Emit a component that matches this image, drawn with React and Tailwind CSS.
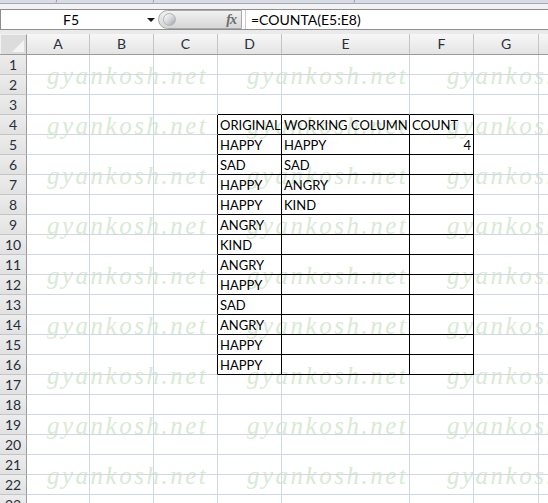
import React from "react";

const cols = [
  { k: "A", w: "w-[63px]" },
  { k: "B", w: "w-[64px]" },
  { k: "C", w: "w-[64px]" },
  { k: "D", w: "w-[64px]" },
  { k: "E", w: "w-[128px]" },
  { k: "F", w: "w-[64px]" },
  { k: "G", w: "w-[65px]" },
  { k: "H", w: "w-[10px]" },
];

const data = {
  4: ["ORIGINAL", "WORKING COLUMN", "COUNT"],
  5: ["HAPPY", "HAPPY", "4"],
  6: ["SAD", "SAD", ""],
  7: ["HAPPY", "ANGRY", ""],
  8: ["HAPPY", "KIND", ""],
  9: ["ANGRY", "", ""],
  10: ["KIND", "", ""],
  11: ["ANGRY", "", ""],
  12: ["HAPPY", "", ""],
  13: ["SAD", "", ""],
  14: ["ANGRY", "", ""],
  15: ["HAPPY", "", ""],
  16: ["HAPPY", "", ""],
};

const rows = Array.from({ length: 23 }, (_, i) => i + 1);
const wmRows = [77, 127, 177, 227, 277, 327, 377, 427, 477];
const wmCols = [47, 247, 447];

function Cell({ col, ci, r }) {
  const inTable = r >= 4 && r <= 16 && ci >= 3 && ci <= 5;
  const leftOfTable = r >= 4 && r <= 16 && ci === 2;
  const aboveTable = r === 3 && ci >= 3 && ci <= 5;
  const rightBorder = ci === 7 ? "" : inTable || leftOfTable ? "border-r border-r-black" : "border-r border-r-[#d0d7e5]";
  const bottomBorder = inTable || aboveTable ? "border-b border-b-black" : "border-b border-b-[#d0d7e5]";
  let text = "";
  let right = false;
  if (inTable && data[r]) {
    text = data[r][ci - 3];
    right = ci === 5 && r === 5;
  }
  return (
    <div
      className={`${col.w} h-[20px] shrink-0 ${rightBorder} ${bottomBorder} flex items-end ${right ? "justify-end pr-[2px]" : "pl-[2px]"} overflow-hidden whitespace-nowrap text-[13px] leading-[18px] text-black`}
    >
      {text}
    </div>
  );
}

export default function App() {
  return (
    <div className="w-[548px] h-[503px] overflow-hidden bg-white font-['Lato','Liberation_Sans',sans-serif] select-none">
      {/* tab strip */}
      <div className="h-[4px] bg-[#d9dce4] border-b border-b-[#a4a8b2] flex">
        <div className="w-[57px] border-r border-r-[#9ca0aa] rounded-br-[2px]" />
        <div className="w-[97px] border-r border-r-[#9ca0aa] rounded-br-[2px]" />
        <div className="w-[198px] border-r border-r-[#9ca0aa] rounded-br-[2px] ml-[3px]" />
        <div className="flex-1 ml-[4px]" />
      </div>
      <div className="h-[5px] bg-[#f2f2f2]" />
      {/* formula bar */}
      <div className="h-[21px] border-y border-y-[#8e8e8e] bg-white flex items-stretch">
        <div className="w-[158px] border-l border-l-[#8e8e8e] relative flex items-center">
          <div className="w-[140px] text-center text-[14px] leading-[19px] text-black">F5</div>
          <svg className="absolute left-[146px] top-[8px]" width="8" height="4" viewBox="0 0 8 4">
            <polygon points="0,0 8,0 4,4" fill="#1a1a1a" />
          </svg>
        </div>
        <div className="w-[84px] rounded-l-full rounded-r-[2px] border border-[#a9a9a9] bg-gradient-to-b from-[#f1f1f1] to-[#d6d6d6] flex items-center justify-between pl-[4px] pr-[5px]">
          <div className="w-[13px] h-[13px] rounded-full bg-gradient-to-br from-[#ffffff] via-[#d6d8dc] to-[#9ea3ab] border border-[#b4b4b4]" />
          <span className="font-['Liberation_Serif',serif] italic font-bold text-[14px] leading-[16px] text-[#6b6b6b] tracking-[-1px]">fx</span>
        </div>
        <div className="w-[1px] bg-[#c8c8c8] ml-[3px]" />
        <div className="flex-1 pl-[5px] flex items-center text-[14px] leading-[19px] text-black">=COUNTA(E5:E8)</div>
      </div>
      <div className="h-[4px] bg-[#eaeaea]" />
      {/* sheet */}
      <div className="relative">
        {/* watermark layer */}
        <div className="absolute inset-0 pointer-events-none overflow-hidden">
          {wmRows.map((y) =>
            wmCols.map((x) => (
              <span
                key={`${x}-${y}`}
                className="absolute font-['Liberation_Serif',serif] italic text-[25px] leading-[24px] tracking-[2.5px] text-[#d9ead4] whitespace-nowrap"
                style={{ left: x, top: y - 34 - 13 }}
              >
                gyankosh.net
              </span>
            ))
          )}
        </div>
        <div className="relative">
          {/* header row */}
          <div className="flex h-[21px] border-b border-b-[#9b9b9b] bg-gradient-to-b from-[#f7f7f7] to-[#e4e4e4]">
            <div className="w-[27px] shrink-0 border-r border-r-[#9b9b9b] bg-[#dcdcdc] relative border-t border-t-[#f2f2f2] border-l border-l-[#f2f2f2]">
              <svg className="absolute right-[2px] bottom-[2px]" width="12" height="12" viewBox="0 0 12 12">
                <polygon points="12,0 12,12 0,12" fill="#f4f4f4" />
              </svg>
            </div>
            {cols.map((c, i) => (
              <div
                key={c.k}
                className={`${c.w} shrink-0 ${i === 7 ? "" : "border-r border-r-[#c4c4c4]"} flex items-center justify-center text-[14px] leading-[18px] text-[#27303a]`}
              >
                {c.k === "H" ? "" : c.k}
              </div>
            ))}
          </div>
          {rows.map((r) => (
            <div key={r} className="flex h-[20px]">
              <div className="w-[27px] h-[20px] shrink-0 bg-gradient-to-b from-[#ececec] to-[#e2e2e2] border-r border-r-[#9b9b9b] border-b border-b-[#c4c4c4] flex items-end justify-center text-[14px] leading-[18px] text-[#27303a]">
                {r}
              </div>
              {cols.map((c, ci) => (
                <Cell key={c.k} col={c} ci={ci} r={r} />
              ))}
            </div>
          ))}
        </div>
      </div>
    </div>
  );
}
